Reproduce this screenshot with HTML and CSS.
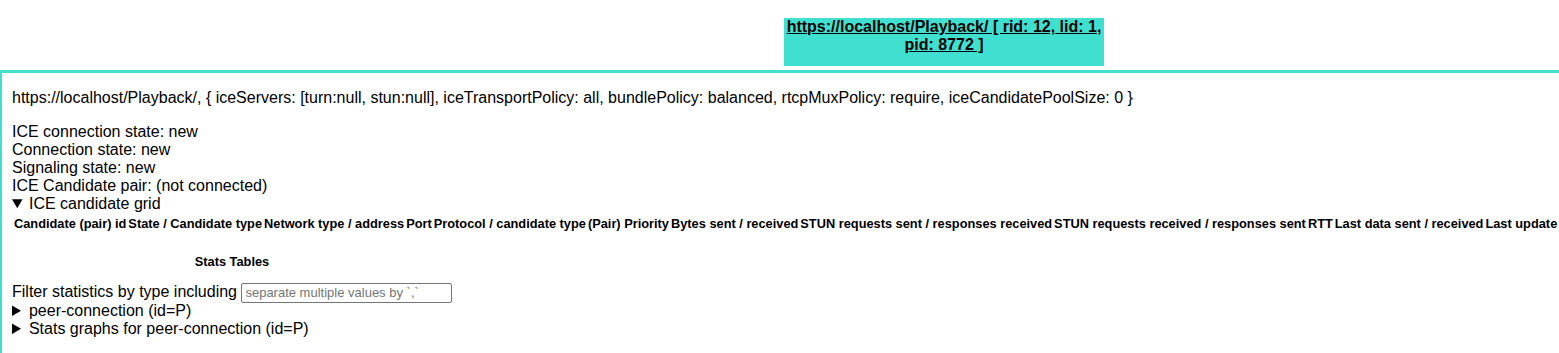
FILE: index.html
```
<!DOCTYPE html>
<html>
<head>
    <title>WebRTC Internals</title>
    <link rel="stylesheet" href="styles.css">
</head>
<body>
<div class="tab-heads">
  <div class="tab-head active-tab-head">https://localhost/Playback/ [ rid: 12, lid: 1, pid: 8772 ]</div>
</div>
<div class="tab-body">
  <p>https://localhost/Playback/, { iceServers: [turn:null, stun:null], iceTransportPolicy: all, bundlePolicy: balanced, rtcpMuxPolicy: require, iceCandidatePoolSize: 0 }</p>
  <div class="states">
    <div>ICE connection state: new</div>
    <div>Connection state: new</div>
    <div>Signaling state: new</div>
    <div>ICE Candidate pair: (not connected)</div>
  </div>
  <details open>
    <summary>ICE candidate grid</summary>
    <table class="candidate-grid">
      <tr>
        <th>Candidate (pair) id</th>
        <th>State / Candidate type</th>
        <th>Network type / address</th>
        <th>Port</th>
        <th>Protocol / candidate type</th>
        <th>(Pair) Priority</th>
        <th>Bytes sent / received</th>
        <th>STUN requests sent / responses received</th>
        <th>STUN requests received / responses sent</th>
        <th>RTT</th>
        <th>Last data sent / received</th>
        <th>Last update</th>
      </tr>
    </table>
  </details>
  <div class="stats-title">Stats Tables</div>
  <div class="filter">
    Filter statistics by type including
    <input type="text" placeholder="separate multiple values by `,`">
  </div>
  <details>
    <summary>peer-connection (id=P)</summary>
  </details>
  <details>
    <summary>Stats graphs for peer-connection (id=P)</summary>
  </details>
</div>
</body>
</html>
```

FILE: styles.css
```
body {
    font-family: "Liberation Sans", Arial, sans-serif;
    font-size: 16px;
    margin: 8px 0 0 0;
    color: #000;
    background-color: #fff;
}
.tab-heads {
    padding-left: 784px;
    height: 62px;
}
.tab-head {
    display: inline-block;
    width: 320px;
    height: 48px;
    margin-top: 10px;
    text-align: center;
    text-decoration: underline;
    overflow: hidden;
    vertical-align: top;
}
.active-tab-head {
    background-color: turquoise;
    font-weight: bold;
}
.tab-body {
    border-left: 2px solid turquoise;
    border-top: 3px solid turquoise;
    padding: 0 0 0 10px;
    height: 280px;
}
.tab-body p {
    margin: 16px 0;
}
summary {
    cursor: pointer;
}
.candidate-grid {
    border-spacing: 0;
    margin: 2px 0 0 1px;
}
.candidate-grid th {
    font-size: 12.8px;
    padding: 1px 1px;
    white-space: nowrap;
}
.stats-title {
    width: 440px;
    text-align: center;
    font-size: 12.8px;
    font-weight: bold;
    margin: 22px 0 13px 0;
}
.filter {
    height: 20px;
    line-height: 20px;
}
.filter input {
    box-sizing: border-box;
    width: 211px;
    height: 20px;
    font-family: "Liberation Sans", Arial, sans-serif;
    font-size: 13px;
    border: 1px solid #767676;
    border-radius: 2px;
    padding: 1px 3px;
    margin: 0;
    vertical-align: middle;
}
.filter input::placeholder {
    color: #757575;
}
```
